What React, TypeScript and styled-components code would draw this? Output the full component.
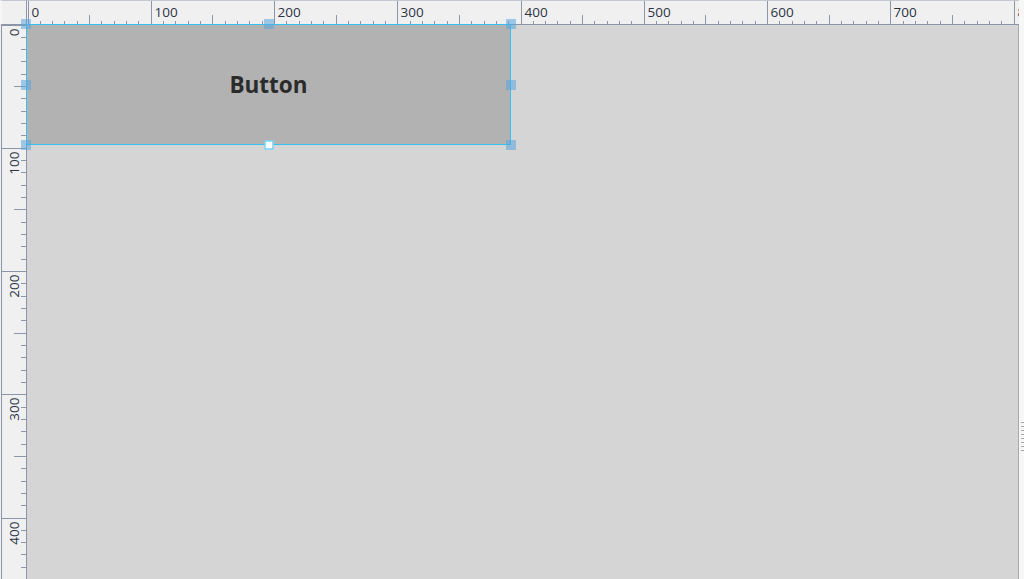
import styled, { createGlobalStyle } from "styled-components";

const UNIT = 1.2325; // px per design unit
const RULER_W = 992;
const RULER_H = 552;

const GlobalStyle = createGlobalStyle`
  html, body {
    margin: 0;
    padding: 0;
    overflow: hidden;
    background: #f0f0f0;
    font-family: "Open Sans", "Noto Sans", sans-serif;
  }
`;

const Editor = styled.div`
  display: grid;
  grid-template-columns: 27px 992px 5px;
  grid-template-rows: 25px 554px;
  width: 1024px;
  height: 579px;
  background: #f0f0f0;
  overflow: hidden;
`;

const Corner = styled.div`
  box-sizing: border-box;
  border-top: 1px solid #c3c8d0;
  border-left: 2px solid #f6f6f6;
  border-right: 1px solid #8c96a8;
  border-bottom: 1px solid #8c96a8;
  background: #f0f0f0;
`;

const RulerBox = styled.div<{ $vertical?: boolean }>`
  box-sizing: border-box;
  background: #f0f0f0;
  overflow: hidden;
  border-top: ${(p) => (p.$vertical ? "none" : "1px solid #c3c8d0")};
  border-bottom: ${(p) => (p.$vertical ? "none" : "1px solid #8c96a8")};
  border-right: ${(p) => (p.$vertical ? "1px solid #8c96a8" : "none")};
  border-left: ${(p) => (p.$vertical ? "1px solid #8c96a8" : "none")};
  margin-left: ${(p) => (p.$vertical ? "1px" : "0")};

  svg {
    display: block;
  }
  text {
    font-family: "Open Sans", "Noto Sans", sans-serif;
    font-size: 13.5px;
    fill: #2b3445;
  }
`;

const Splitter = styled.div`
  grid-row: 1 / span 2;
  grid-column: 3;
  background: #f7f7f7;
  display: flex;
  align-items: flex-start;
  justify-content: flex-end;
  padding-top: 422px;
`;

const Grip = styled.div`
  display: flex;
  flex-direction: column;
  gap: 3px;
  width: 3px;

  span {
    display: block;
    height: 1px;
    background: #a8a8a8;
  }
`;

const Canvas = styled.div`
  position: relative;
  z-index: 1;
  background: #d5d5d5;
  border-right: 1px solid #a9a9a9;
`;

const Widget = styled.button`
  position: absolute;
  left: -1px;
  top: -1px;
  width: 485px;
  height: 121px;
  box-sizing: border-box;
  margin: 0;
  padding: 0;
  border: 1px solid #35c1f1;
  background: #b2b2b2;
  font-family: "Open Sans", "Noto Sans", sans-serif;
  font-weight: 700;
  font-size: 22.5px;
  color: #2b2b2b;
  display: flex;
  align-items: center;
  justify-content: center;
  cursor: default;
`;

const SelectionFrame = styled.div`
  position: absolute;
  left: -1px;
  top: -1px;
  width: 485px;
  height: 121px;
  pointer-events: none;
`;

const Handle = styled.span<{ $x: number; $y: number; $anchor?: boolean }>`
  position: absolute;
  left: ${(p) => p.$x}%;
  top: ${(p) => p.$y}%;
  width: ${(p) => (p.$anchor ? 9 : 10)}px;
  height: ${(p) => (p.$anchor ? 9 : 10)}px;
  box-sizing: border-box;
  transform: translate(-50%, -50%);
  background: ${(p) => (p.$anchor ? "#ffffff" : "rgba(90, 165, 222, 0.55)")};
  border: ${(p) => (p.$anchor ? "1px solid #35c1f1" : "none")};
`;

function HorizontalRuler() {
  const marks = [];
  for (let i = 0; i <= 81; i++) {
    const x = Math.round(0.5 + i * 10 * UNIT) + 0.5;
    const major = i % 10 === 0;
    const mid = i % 5 === 0;
    const y1 = major ? 0 : mid ? 14 : 20;
    marks.push(<line key={i} x1={x} x2={x} y1={y1} y2={24} stroke="#8c96a8" strokeWidth={1} />);
    if (major) {
      marks.push(
        <text key={`t${i}`} x={x + 3} y={16}>
          {i * 10}
        </text>
      );
    }
  }
  return (
    <svg width={RULER_W} height={23}>
      {marks}
    </svg>
  );
}

function VerticalRuler() {
  const marks = [];
  for (let i = 0; i <= 45; i++) {
    const y = Math.round(0.5 + i * 10 * UNIT) - 0.5;
    const major = i % 10 === 0;
    const mid = i % 5 === 0;
    const x1 = major ? 0 : mid ? 12 : 19;
    marks.push(<line key={i} x1={x1} x2={26} y1={y} y2={y} stroke="#8c96a8" strokeWidth={1} />);
    if (major) {
      marks.push(
        <text key={`t${i}`} textAnchor="end" transform={`translate(17, ${y + 3}) rotate(-90)`}>
          {i * 10}
        </text>
      );
    }
  }
  return (
    <svg width={25} height={RULER_H}>
      {marks}
    </svg>
  );
}

export default function App() {
  return (
    <>
      <GlobalStyle />
      <Editor>
        <Corner />
        <RulerBox>
          <HorizontalRuler />
        </RulerBox>
        <Splitter>
          <Grip>
            {Array.from({ length: 8 }).map((_, i) => (
              <span key={i} />
            ))}
          </Grip>
        </Splitter>
        <RulerBox $vertical>
          <VerticalRuler />
        </RulerBox>
        <Canvas>
          <Widget>Button</Widget>
          <SelectionFrame>
            <Handle $x={0} $y={0} />
            <Handle $x={50} $y={0} />
            <Handle $x={100} $y={0} />
            <Handle $x={0} $y={50} />
            <Handle $x={100} $y={50} />
            <Handle $x={0} $y={100} />
            <Handle $x={50} $y={100} $anchor />
            <Handle $x={100} $y={100} />
          </SelectionFrame>
        </Canvas>
      </Editor>
    </>
  );
}
